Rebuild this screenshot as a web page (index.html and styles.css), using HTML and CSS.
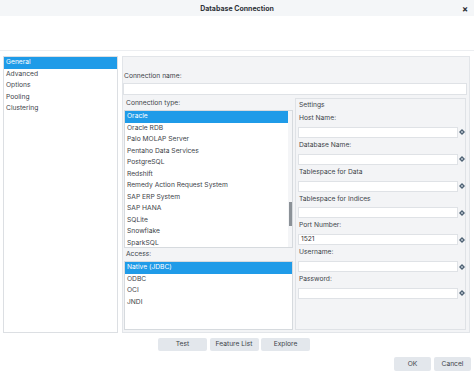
FILE: index.html
```html
<!DOCTYPE html>
<html lang="en">
<head>
<meta charset="utf-8">
<title>Database Connection</title>
<link rel="stylesheet" href="styles.css">
</head>
<body>
<div class="window">
  <div class="titlebar">
    <span></span>
    <span class="title">Database Connection</span>
    <span class="close">×</span>
  </div>
  <div class="header-space"></div>
  <div class="main">
    <ul class="nav">
      <li class="row selected">General</li>
      <li class="row">Advanced</li>
      <li class="row">Options</li>
      <li class="row">Pooling</li>
      <li class="row">Clustering</li>
    </ul>
    <div class="panel">
      <div class="name-label">Connection name:</div>
      <div class="input wide"></div>
      <div class="columns">
        <div class="left-col">
          <div class="col-label">Connection type:</div>
          <div class="listbox types">
            <ul class="items">
              <li class="row selected">Oracle</li>
              <li class="row">Oracle RDB</li>
              <li class="row">Palo MOLAP Server</li>
              <li class="row">Pentaho Data Services</li>
              <li class="row">PostgreSQL</li>
              <li class="row">Redshift</li>
              <li class="row">Remedy Action Request System</li>
              <li class="row">SAP ERP System</li>
              <li class="row">SAP HANA</li>
              <li class="row">SQLite</li>
              <li class="row">Snowflake</li>
              <li class="row">SparkSQL</li>
            </ul>
            <div class="scrollbar"><div class="thumb"></div></div>
          </div>
          <div class="col-label">Access:</div>
          <ul class="listbox access">
            <li class="row selected">Native (JDBC)</li>
            <li class="row">ODBC</li>
            <li class="row">OCI</li>
            <li class="row">JNDI</li>
          </ul>
        </div>
        <div class="settings">
          <div class="settings-title">Settings</div>
          <div class="field"><div class="flabel">Host Name:</div><div class="frow"><div class="input"></div><svg class="var" viewBox="0 0 6 6"><polygon points="3,0 6,3 3,6 0,3" fill="#4f6274"/><circle cx="3" cy="3" r="0.9" fill="#c9d3dd"/></svg></div></div>
          <div class="field"><div class="flabel">Database Name:</div><div class="frow"><div class="input"></div><svg class="var" viewBox="0 0 6 6"><polygon points="3,0 6,3 3,6 0,3" fill="#4f6274"/><circle cx="3" cy="3" r="0.9" fill="#c9d3dd"/></svg></div></div>
          <div class="field"><div class="flabel">Tablespace for Data</div><div class="frow"><div class="input"></div><svg class="var" viewBox="0 0 6 6"><polygon points="3,0 6,3 3,6 0,3" fill="#4f6274"/><circle cx="3" cy="3" r="0.9" fill="#c9d3dd"/></svg></div></div>
          <div class="field"><div class="flabel">Tablespace for Indices</div><div class="frow"><div class="input"></div><svg class="var" viewBox="0 0 6 6"><polygon points="3,0 6,3 3,6 0,3" fill="#4f6274"/><circle cx="3" cy="3" r="0.9" fill="#c9d3dd"/></svg></div></div>
          <div class="field"><div class="flabel">Port Number:</div><div class="frow"><div class="input">1521</div><svg class="var" viewBox="0 0 6 6"><polygon points="3,0 6,3 3,6 0,3" fill="#4f6274"/><circle cx="3" cy="3" r="0.9" fill="#c9d3dd"/></svg></div></div>
          <div class="field"><div class="flabel">Username:</div><div class="frow"><div class="input"></div><svg class="var" viewBox="0 0 6 6"><polygon points="3,0 6,3 3,6 0,3" fill="#4f6274"/><circle cx="3" cy="3" r="0.9" fill="#c9d3dd"/></svg></div></div>
          <div class="field"><div class="flabel">Password:</div><div class="frow"><div class="input"></div><svg class="var" viewBox="0 0 6 6"><polygon points="3,0 6,3 3,6 0,3" fill="#4f6274"/><circle cx="3" cy="3" r="0.9" fill="#c9d3dd"/></svg></div></div>
        </div>
      </div>
    </div>
  </div>
  <div class="actions">
    <button class="btn b-test">Test</button>
    <button class="btn b-feat">Feature List</button>
    <button class="btn b-expl">Explore</button>
  </div>
  <div class="footer">
    <button class="btn b-ok">OK</button>
    <button class="btn b-cancel">Cancel</button>
  </div>
</div>
</body>
</html>
```

FILE: styles.css
```css
* { box-sizing: border-box; }
html, body { margin: 0; padding: 0; background: #ffffff; }
body {
  width: 474px;
  height: 375px;
  overflow: hidden;
  font-family: Inter, "Noto Sans", sans-serif;
  font-size: 6.7px;
  color: #40444a;
}
ul { list-style: none; margin: 0; padding: 0; }

.titlebar {
  height: 16px;
  background: #f4f6f8;
  display: grid;
  grid-template-columns: 1fr auto 1fr;
  align-items: center;
}
.title { font-weight: 700; color: #2f3338; font-size: 7px; }
.close {
  justify-self: end;
  margin-right: 6px;
  font-weight: 700;
  font-size: 9px;
  color: #2a2e33;
  line-height: 1;
}
.header-space {
  height: 35px;
  border-bottom: 1px solid #eceef1;
}

.main {
  display: flex;
  gap: 4px;
  padding: 5px 4px 0 3px;
  align-items: stretch;
}
.nav {
  width: 115px;
  background: #ffffff;
  border: 1px solid #dcdfe3;
}
.row {
  height: 11.5px;
  line-height: 11.5px;
  padding-left: 2px;
  white-space: nowrap;
}
.row.selected { background: #1f9be8; color: #ffffff; }

.panel {
  flex: 1;
  background: #f3f4f6;
  border: 1px solid #e2e5e9;
  padding: 12px 0 2px 0;
}
.name-label {
  line-height: 14px;
  padding-left: 1px;
}
.input {
  background: #ffffff;
  border: 1px solid #dfe2e6;
  height: 11px;
  line-height: 9px;
  padding-left: 2px;
  color: #333;
}
.input.wide { height: 12px; margin-right: 2px; }

.columns {
  display: flex;
  margin-top: 2px;
  padding: 0 3px 0 1px;
}
.left-col { width: 169px; }
.col-label { line-height: 13px; padding-left: 2px; }
.listbox {
  background: #ffffff;
  border: 1px solid #d6dade;
  overflow: hidden;
}
.types {
  height: 138px;
  display: flex;
}
.types .items { flex: 1; }
.scrollbar {
  width: 4px;
  position: relative;
  background: #f4f5f7;
}
.thumb {
  position: absolute;
  right: 0;
  top: 91px;
  width: 3px;
  height: 24px;
  background: #8b9197;
}
.access { height: 69px; }

.settings {
  flex: 1;
  margin-left: 2px;
  margin-top: 1px;
  border: 1px solid #dfe2e6;
  padding: 1px 0 0 2px;
}
.settings-title { line-height: 11px; padding-left: 1px; }
.flabel {
  height: 15.85px;
  line-height: 15.85px;
  padding-left: 1px;
}
.frow { display: flex; align-items: center; }
.frow .input { flex: 1; }
.var { width: 6px; height: 6px; margin-left: 1px; flex: none; }

.actions {
  display: flex;
  gap: 2.5px;
  padding: 5px 0 0 158px;
}
.btn {
  font-family: Inter, "Noto Sans", sans-serif;
  font-size: 6.7px;
  color: #40444a;
  background: #e3e7ec;
  border: none;
  border-radius: 2px;
  padding: 0;
  height: 13px;
  line-height: 13px;
}
.b-test, .b-feat, .b-expl { width: 49px; }
.footer {
  display: flex;
  justify-content: flex-end;
  gap: 3px;
  padding: 6px 3px 0 0;
}
.footer .btn { width: 37px; height: 14px; line-height: 14px; }
```
